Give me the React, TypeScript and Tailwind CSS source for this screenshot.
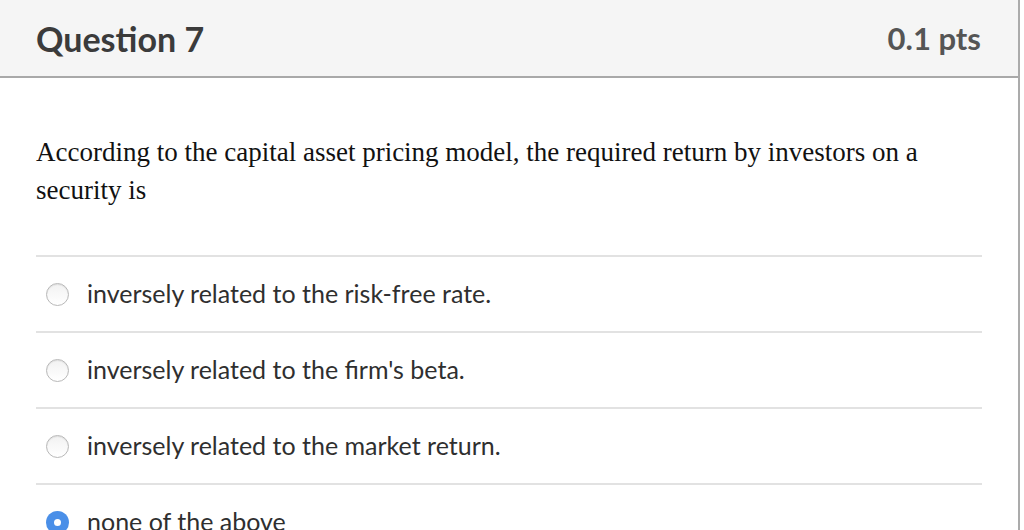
import React from "react";

const options = [
  { label: "inversely related to the risk-free rate.", checked: false },
  { label: "inversely related to the firm's beta.", checked: false },
  { label: "inversely related to the market return.", checked: false },
  { label: "none of the above", checked: true },
];

function Radio({ checked }: { checked: boolean }) {
  if (checked) {
    return (
      <span className="flex h-[23px] w-[23px] shrink-0 items-center justify-center rounded-full bg-[#4a8fe8]">
        <span className="h-[7px] w-[7px] rounded-full bg-white" />
      </span>
    );
  }
  return (
    <span className="h-[23px] w-[23px] shrink-0 rounded-full border border-[#b8b8b8] bg-gradient-to-b from-[#f2f2f2] to-white shadow-[inset_0_1px_1px_rgba(0,0,0,0.08)]" />
  );
}

export default function App() {
  return (
    <div className="h-[530px] w-[1024px] overflow-hidden bg-white">
      <div className="h-full w-[1020px] border-r-2 border-[#ababab]">
        <div className="flex h-[78px] items-center justify-between border-b-2 border-[#a9a9a9] bg-[#f5f5f5] pl-[36px] pr-[37px] pt-[1px] font-['Lato'] font-bold">
          <h2 className="text-[34px] leading-none text-[#3b3b3b]">Question 7</h2>
          <span className="text-[31px] leading-none text-[#555]">0.1 pts</span>
        </div>
        <div className="px-[36px] pt-[55px]">
          <p className="font-['Liberation_Serif'] text-[27px] leading-[38px] text-[#111]">
            According to the capital asset pricing model, the required return by investors on a
            <br />
            security is
          </p>
          <div className="mt-[46px]">
            {options.map((o) => (
              <div
                key={o.label}
                className="flex h-[76px] items-center gap-[18px] border-t-2 border-[#e2e2e2] pl-[10px] font-['Lato'] text-[25px] text-[#2f2f2f]"
              >
                <Radio checked={o.checked} />
                <span>{o.label}</span>
              </div>
            ))}
          </div>
        </div>
      </div>
    </div>
  );
}
